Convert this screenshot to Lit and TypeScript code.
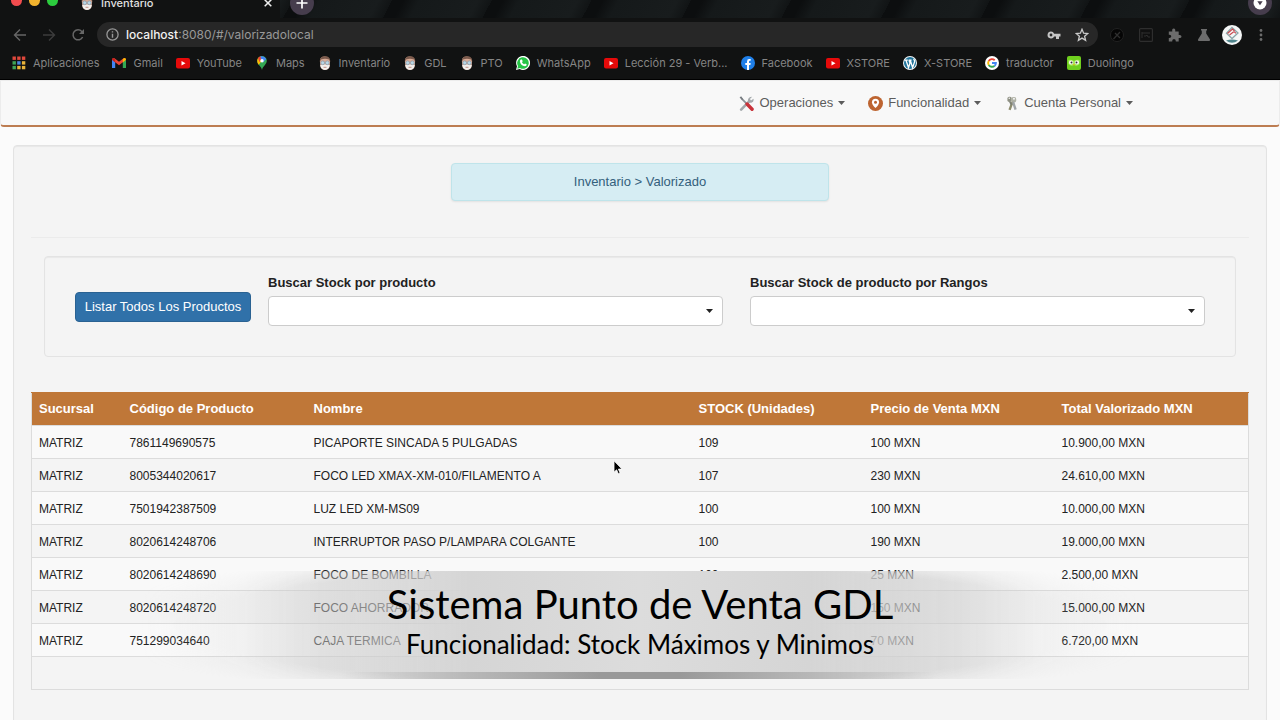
import { LitElement, html, css, svg } from "lit";
import { customElement } from "lit/decorators.js";

const face = svg`
  <path d="M2 7Q1 0 7 0.5T12 7L11.500 11Q10 14 7 14T2.500 11Z" fill="#d9ab96"/>
  <path d="M1.800 6Q1.500 .3 7 .3T12.200 6L11 3.500Q7 1.800 3 3.500Z" fill="#7b5a4c"/>
  <path d="M2.200 9Q7 8 11.800 9L11 12Q9 14 7 14T3 12Z" fill="#f3efec"/>
  <circle cx="4.700" cy="6.800" r="1.900" fill="#b9d6e4" stroke="#7c93a5" stroke-width=".6"/>
  <circle cx="9.300" cy="6.800" r="1.900" fill="#b9d6e4" stroke="#7c93a5" stroke-width=".6"/>
  <path d="M5.500 11.300h3" stroke="#b0786c" stroke-width=".8"/>`;
const youtube = svg`<rect y="2" width="14" height="10.500" rx="2" fill="#e60a0a"/><path d="M5.500 4.900v4.700l4-2.350z" fill="#fff"/>`;
const appColors = ["#e0483c", "#e0483c", "#e0483c", "#3fa457", "#4a86e0", "#e9b43a", "#3fa457", "#e9b43a", "#e9b43a"];

const icons: Record<string, unknown> = {
  apps: appColors.map((c, i) => svg`<rect x=${0.5 + (i % 3) * 4.7} y=${0.5 + Math.floor(i / 3) * 4.7} width="3.4" height="3.4" fill=${c}/>`),
  gmail: svg`<path d="M0 3.500V12h3.200V6z" fill="#4285f4"/><path d="M14 3.500V12h-3.200V6z" fill="#34a853"/><path d="M0 3.800Q.3 1.500 2.500 2.300L7 5.800l4.500-3.500Q13.700 1.500 14 3.800L7 9.300z" fill="#ea4335"/><path d="M10.800 2.900Q13.800 .8 14 3.800L10.800 6.400z" fill="#fbbc04"/><path d="M3.200 2.900Q.2 .8 0 3.800L3.200 6.400z" fill="#c5221f"/>`,
  youtube,
  maps: svg`<path d="M7 14C6.500 10.500 2.200 8.500 2.200 4.800A4.800 4.800 0 0 1 11.800 4.800C11.800 8.500 7.500 10.500 7 14Z" fill="#34a853"/><path d="M2.200 4.800Q2.200 2.500 4 1.200L7 4.800 3.600 8.800Q2.200 7 2.200 4.800Z" fill="#fbbc04"/><path d="M3 2.200A4.800 4.800 0 0 1 5.500 .3L7.500 2.500 4.500 6z" fill="#ea4335"/><path d="M5.500 .3Q9.500-.5 11.300 3L8 6.500 6 4z" fill="#4285f4"/><circle cx="7" cy="4.800" r="1.700" fill="#fff"/>`,
  face,
  whatsapp: svg`<path d="M0 14L1 10.300A7 7 0 1 1 3.700 13Z" fill="#fff"/><path d="M1.300 12.700L2 10A5.800 5.800 0 1 1 4 12Z" fill="#26c446"/><path d="M4.800 3.600l1.200 0 .7 1.700-.7.900Q6.700 7.700 8.200 8.300l.8-.9 1.700.8q0 1.800-1.700 2Q4.500 9.600 3.900 5.400 3.900 4.300 4.800 3.600Z" fill="#fff"/>`,
  facebook: svg`<circle cx="7" cy="7" r="7" fill="#1f7fe8"/><path d="M6 14V9H4.300V7H6V5.400Q6 3 8.300 3H9.700V4.800H8.800Q8 4.800 8 5.700V7H9.700L9.400 9H8v5z" fill="#fff"/>`,
  wordpress: svg`<circle cx="7" cy="7" r="7" fill="#f1f6f8"/><circle cx="7" cy="7" r="6" fill="#21749b"/><path d="M1.500 4.200h3.300M3 4.300l2.500 7.300L7 7 6 4.300M5.600 4.200h3M7.300 4.300l2.300 7.300 2-6Q11.700 4 10.500 3" fill="none" stroke="#fff" stroke-width="1.300"/>`,
  google: svg`<circle cx="7" cy="7" r="7" fill="#fff"/><g fill="none" stroke-width="1.900"><path d="M3.700 5A3.900 3.900 0 0 1 9.700 4.200" stroke="#ea4335"/><path d="M3.700 9A3.900 3.900 0 0 1 3.700 5" stroke="#fbbc05"/><path d="M9.500 9.900A3.900 3.900 0 0 1 3.700 9" stroke="#34a853"/><path d="M7 7h3.900A3.900 3.900 0 0 1 9.500 9.900" stroke="#4285f4"/></g>`,
  duolingo: svg`<rect width="14" height="14" rx="2" fill="#6fd01e"/><path d="M1.500 4Q4 3 7 5q3-2 5.500-1v4q-2.500 3-5.500 1-3 2-5.500-1z" fill="#a8ec5c"/><circle cx="4" cy="6.500" r="2" fill="#fff"/><circle cx="10" cy="6.500" r="2" fill="#fff"/><circle cx="4.500" cy="6.500" r="1" fill="#333"/><circle cx="9.500" cy="6.500" r="1" fill="#333"/><path d="M6 8h2L7 9.800z" fill="#f4a91c"/>`,
  tools: svg`<path d="M2 2L12 12" stroke="#8b9095" stroke-width="1.600"/><path d="M2 12.700L9.500 5" stroke="#a3a8ab" stroke-width="2.400" stroke-linecap="round"/><path d="M12.300.7L10.200 2.800l1 1.300 2.300-1.600q.7 3-2 3.700-3 .3-3.300-2Q8.500.9 12.300.7Z" fill="#a3a8ab"/><path d="M.5 1.500L2 .3l2 2.700-1 .8z" fill="#777c80"/><path d="M7.500 7.500l4.700 4.800" stroke="#c8323a" stroke-width="3.200" stroke-linecap="round"/>`,
  pin: svg`<circle cx="7" cy="7" r="7" fill="#bd6430"/><path d="M7 11.300Q3.700 8 3.700 5.800a3.300 3.300 0 0 1 6.600 0Q10.300 8 7 11.300Z" fill="#fff"/><circle cx="7" cy="5.800" r="1.400" fill="#bd6430"/>`,
  keys: svg`<rect x="3.200" y=".7" width="4" height="4.800" rx="1.600" fill="#8f9184"/><rect x="6.800" y=".9" width="4.600" height="5.200" rx="1.800" fill="#b0b2a6"/><circle cx="9.300" cy="2.500" r=".9" fill="#f8f8f8"/><circle cx="4.900" cy="2.200" r=".7" fill="#f8f8f8"/><path d="M8 5.500L5.200 13" stroke="#8d8c6c" stroke-width="2.200"/><path d="M8.500 5.500l2.300 7.300" stroke="#a0a5a8" stroke-width="2.200"/><path d="M5.500 5.500l1.700 3" stroke="#7d8076" stroke-width="1.600"/>`,
};

const icon = (name: string, cls = "icon") => html`<svg class=${cls} viewBox="0 0 14 14" aria-hidden="true">${icons[name]}</svg>`;

const bookmarks: [string, string][] = [
  ["apps", "Aplicaciones"], ["gmail", "Gmail"], ["youtube", "YouTube"], ["maps", "Maps"],
  ["face", "Inventario"], ["face", "GDL"], ["face", "PTO"], ["whatsapp", "WhatsApp"],
  ["youtube", "Lección 29 - Verb..."], ["facebook", "Facebook"], ["youtube", "XSTORE"],
  ["wordpress", "X-STORE"], ["google", "traductor"], ["duolingo", "Duolingo"],
];

@customElement("browser-chrome")
class BrowserChrome extends LitElement {
  static styles = css`
    :host { display: block; height: 80px; overflow: hidden; background: #111212; border-bottom: 1px solid #000; box-sizing: border-box; font-family: Inter, "Liberation Sans", sans-serif; font-size: 11px; color: #858585; }
    button { padding: 0; border: 0; background: none; color: inherit; display: flex; align-items: center; justify-content: center; }
    .strip { display: flex; align-items: center; height: 30px; margin-top: -12px; padding-right: 8px; background: repeating-linear-gradient(118deg, #0c0e0f 0 10px, #15191a 24px, #181c1d 76px, #111415 88px); }
    .tab { display: flex; align-items: center; width: 280px; height: 30px; box-sizing: border-box; background: #111212; padding: 0 5px 0 11px; }
    .lights { display: flex; gap: 7px; width: 69px; margin-top: -6px; }
    .light { width: 11px; height: 11px; border-radius: 50%; }
    .red { background: #f24c4e; } .yellow { background: #f2b32e; } .green { background: #2ccc3e; }
    .tab .icon { margin-right: 7px; }
    .title { flex: 1; color: #e0e0e0; font-weight: 500; }
    .icon { width: 14px; height: 14px; flex: none; }
    .close { width: 14px; height: 14px; color: #eee; }
    .plus { width: 24px; height: 24px; border-radius: 50%; background: #463d4d; color: #fff; margin-left: 10px; }
    .more { width: 24px; height: 24px; border-radius: 50%; background: #463d4d; margin-left: auto; }
    .bar { display: flex; align-items: center; height: 33px; padding: 0 12px; gap: 14px; }
    .bar > button { width: 15px; height: 24px; flex: none; }
    .pill { flex: 1; display: flex; align-items: center; gap: 7px; height: 25px; border-radius: 13px; background: #272727; padding: 0 9px; margin-left: -2px; margin-right: -3px; }
    .url { flex: 1; min-width: 0; font-size: 12px; color: #999; }
    .host { color: #f2f2f2; font-weight: 500; }
    .pill button { width: 14px; height: 20px; color: #c9c9c9; margin-left: 7px; }
    .bar .avatar { width: 20px; height: 20px; margin: 0 -3px; }
    .marks { display: flex; align-items: center; height: 24px; padding: 0 12px; gap: 13px; }
    .mark { display: flex; align-items: center; gap: 7px; color: inherit; text-decoration: none; white-space: nowrap; }
  `;
  render() {
    return html`
      <div class="strip">
        <div class="tab">
          <div class="lights"><span class="light red"></span><span class="light yellow"></span><span class="light green"></span></div>
          ${icon("face")}<span class="title">Inventario</span>
          <button class="close" aria-label="Cerrar"><svg width="8" height="8" viewBox="0 0 8 8"><path d="M.7.7l6.600 6.600M7.300.7L.7 7.300" stroke="currentColor" stroke-width="1.500"/></svg></button>
        </div>
        <button class="plus" aria-label="Nueva pestaña"><svg width="12" height="12" viewBox="0 0 12 12"><path d="M6 .5v11M.5 6h11" stroke="currentColor" stroke-width="1.700"/></svg></button>
        <button class="more" aria-label="Pestañas"><svg width="14" height="14" viewBox="0 0 14 14"><circle cx="7" cy="7" r="6.500" fill="#fff"/><path d="M4.300 5.200h5.400L7 9.300z" fill="#463d4d"/></svg></button>
      </div>
      <div class="bar">
        <button aria-label="Atrás"><svg width="14" height="14" viewBox="0 0 14 14"><path d="M13 7H2M7 1.500L1.500 7 7 12.500" fill="none" stroke="#666" stroke-width="1.400"/></svg></button>
        <button aria-label="Adelante"><svg width="14" height="14" viewBox="0 0 14 14"><path d="M1 7h11M7 1.500L12.500 7 7 12.500" fill="none" stroke="#3c3c3c" stroke-width="1.400"/></svg></button>
        <button aria-label="Recargar"><svg width="14" height="14" viewBox="0 0 14 14"><path d="M11.600 9A5 5 0 1 1 10.800 3.500L12.300 5" fill="none" stroke="#666" stroke-width="1.500"/><path d="M13 1v5H8z" fill="#666"/></svg></button>
        <div class="pill">
          <svg width="13" height="13" viewBox="0 0 13 13"><circle cx="6.500" cy="6.500" r="5.600" fill="none" stroke="#999" stroke-width="1.300"/><path d="M6.500 5.700v4M6.500 3.200v1.400" stroke="#999" stroke-width="1.400"/></svg>
          <span class="url"><span class="host">localhost</span>:8080/#/valorizadolocal</span>
          <button aria-label="Contraseñas"><svg width="14" height="14" viewBox="0 0 14 14"><path d="M4 3.500a3.500 3.500 0 1 0 3.200 5H9V11h3V8.500h1.500V5.700H7.200A3.500 3.500 0 0 0 4 3.500Z" fill="#c4c4c4"/><circle cx="4" cy="7" r="1.400" fill="#272727"/></svg></button>
          <button aria-label="Marcador"><svg width="14" height="14" viewBox="0 0 14 14"><path d="M7 1.300l1.600 3.900 4.200.3-3.200 2.700 1 4.100L7 10.100l-3.600 2.200 1-4.100L1.200 5.500l4.200-.3z" fill="none" stroke="#c9c9c9" stroke-width="1.300"/></svg></button>
        </div>
        <button aria-label="Extensión 1"><svg width="14" height="14" viewBox="0 0 14 14"><circle cx="7" cy="7" r="6.500" fill="#050505" stroke="#222"/><path d="M3.500 11L10 4M5 5l5 5" stroke="#2e2e2e" stroke-width="1.300"/></svg></button>
        <button aria-label="Extensión 2"><svg width="14" height="14" viewBox="0 0 14 14"><rect x=".6" y=".6" width="12.800" height="12.800" rx="1" fill="#101010" stroke="#2e2e2e" stroke-width="1.200"/><path d="M3 4v6M3 5h8M5 8h2l1-1 1 2h2" fill="none" stroke="#2e2e2e"/></svg></button>
        <button aria-label="Extensiones"><svg width="14" height="14" viewBox="0 0 14 14"><path d="M.8 3.500h3.500Q3.700.6 5.700.6T7.200 3.500h3.500V7q2.800-.5 2.800 1.500t-2.800 1.500v3.500H7.800q.3-2.500-1.800-2.500T4.200 13.500H.8V10q2.500.2 2.500-1.700T.8 6.700Z" fill="#6c6c6c"/></svg></button>
        <button aria-label="Labs"><svg width="14" height="14" viewBox="0 0 14 14"><path d="M4 1h6v1.600H9.200V5.500L13 11.500Q13.300 13 12 13H2Q.7 13 1 11.500L4.800 5.500V2.600H4z" fill="#6c6c6c"/></svg></button>
        <button class="avatar" aria-label="Perfil"><svg width="20" height="20" viewBox="0 0 20 20"><circle cx="10" cy="10" r="10" fill="#f4f6f6"/><path d="M4 15.500Q10 13.500 16 15.500 10 20 4 15.500Z" fill="#4f858c"/><path d="M10 2.500L16 8 10 13.500 4.500 8.300z" fill="none" stroke="#8ba5a8" stroke-width="1.300"/><path d="M5.500 8.500L10.500 4 12.500 6M7.500 10L12 6.500 14 8.300" fill="none" stroke="#c8464d" stroke-width="1.100"/></svg></button>
        <button aria-label="Menú"><svg width="4" height="14" viewBox="0 0 4 14" fill="#6c6c6c"><circle cx="2" cy="2.500" r="1.400"/><circle cx="2" cy="7" r="1.400"/><circle cx="2" cy="11.500" r="1.400"/></svg></button>
      </div>
      <nav class="marks">${bookmarks.map(([i, t]) => html`<a class="mark" href="#">${icon(i)}<span>${t}</span></a>`)}</nav>`;
  }
}

const rows = [
  ["7861149690575", "PICAPORTE SINCADA 5 PULGADAS", "109", "100 MXN", "10.900,00 MXN"],
  ["8005344020617", "FOCO LED XMAX-XM-010/FILAMENTO A", "107", "230 MXN", "24.610,00 MXN"],
  ["7501942387509", "LUZ LED XM-MS09", "100", "100 MXN", "10.000,00 MXN"],
  ["8020614248706", "INTERRUPTOR PASO P/LAMPARA COLGANTE", "100", "190 MXN", "19.000,00 MXN"],
  ["8020614248690", "FOCO DE BOMBILLA", "100", "25 MXN", "2.500,00 MXN"],
  ["8020614248720", "FOCO AHORRADOR", "100", "150 MXN", "15.000,00 MXN"],
  ["751299034640", "CAJA TERMICA", "96", "70 MXN", "6.720,00 MXN"],
];
const heads = ["Sucursal", "Código de Producto", "Nombre", "STOCK (Unidades)", "Precio de Venta MXN", "Total Valorizado MXN"];
const caret = html`<svg class="caret" width="7" height="4" viewBox="0 0 7 4" aria-hidden="true"><path d="M0 0h7L3.500 4z" fill="currentColor"/></svg>`;

@customElement("app-root")
class AppRoot extends LitElement {
  static styles = css`
    :host { display: block; position: relative; height: 100vh; overflow: hidden; background: #fbfbfb; font: 13px/18px "Liberation Sans", Arial, sans-serif; color: #222; }
    .nav { display: flex; justify-content: flex-end; align-items: center; gap: 23px; height: 47px; box-sizing: border-box; padding-right: 146px; background: #f8f8f8; border: 1px solid #ececec; border-bottom: 2px solid #bd7d52; border-radius: 0 0 4px 4px; }
    .item { display: flex; align-items: center; gap: 5px; color: #5c5c5c; text-decoration: none; }
    .icon { width: 15px; height: 15px; }
    .well { margin: 18px 13px 0; min-height: 640px; box-sizing: border-box; padding: 17px; background: #f4f4f4; border: 1px solid #e3e3e3; border-radius: 4px; box-shadow: inset 0 1px 1px #0000000d; }
    .crumb { width: 31%; box-sizing: border-box; margin: 0 auto; padding: 9px; text-align: center; color: #34607c; background: #d6edf3; border: 1px solid #bfe4ea; border-radius: 4px; box-shadow: 0 1px 2px #00000014; }
    .rule { margin: 36px 0 18px; border: 0; border-top: 1px solid #ebebeb; }
    .search { display: flex; gap: 17px; margin: 0 13px; padding: 17px 30px 30px; background: #f4f4f4; border: 1px solid #e3e3e3; border-radius: 4px; box-shadow: inset 0 1px 1px #0000000d; }
    .list { flex: none; width: 176px; margin-top: 18px; height: 30px; padding: 0; border: 1px solid #2a6292; border-radius: 4px; background: #3071a9; color: #fff; font: inherit; }
    .fields { flex: 1; display: grid; grid-template-columns: 1fr 1fr; column-gap: 27px; }
    .field { display: grid; grid-template-rows: 18px 30px; row-gap: 4px; }
    .label { font-weight: bold; }
    .control { display: grid; align-items: center; }
    .select, .control .caret { grid-area: 1 / 1; }
    .select { appearance: none; width: 100%; height: 30px; border: 1px solid #ccc; border-radius: 4px; background: #fff; font: inherit; }
    .control .caret { justify-self: end; margin-right: 10px; pointer-events: none; color: #222; }
    .table { width: 100%; margin-top: 35px; border-collapse: collapse; table-layout: fixed; border: 1px solid #dcdcdc; }
    .c0 { width: 91px; } .c1 { width: 184px; } .c2 { width: 385px; } .c3 { width: 172px; } .c4 { width: 191px; }
    th, td { height: 33px; box-sizing: border-box; padding: 0 7px; text-align: left; border-top: 1px solid #dcdcdc; white-space: nowrap; }
    td { padding-top: 2px; font-size: 12px; }
    th { background: #bf7738; color: #fff; border-top-color: #bf7738; }
    tbody tr:nth-child(odd) { background: #f9f9f9; }
    tbody tr:last-child { background: none; }
    .banner { position: absolute; top: 571px; left: 11%; right: 11%; height: 108px; box-sizing: border-box; padding-top: 9px; text-align: center; color: #000; font-family: Lato, sans-serif; pointer-events: none; }
    .shade, .edge { position: absolute; inset: 0; }
    .shade { background: linear-gradient(90deg, #c8c8c800, #c8c8c826 10%, #c8c8c880 18%, #cececeb8 27%, #d5d5d5 33%, #dcdcdc 50%, #d5d5d5 67%, #cececeb8 76%, #c8c8c880 82%, #c8c8c826 90%, #c8c8c800); -webkit-mask: radial-gradient(ellipse 58% 70% at 50% 50%, #000 78%, #0000); }
    .edge { top: auto; height: 7px; background: linear-gradient(90deg, #99999900 20%, #999 46%, #999 54%, #99999900 80%); }
    .big, .small { position: relative; margin: 0; font-weight: 400; }
    .big { font-size: 40px; line-height: 48px; }
    .small { font-size: 26px; line-height: 32px; }
    .pointer { position: absolute; left: 613px; top: 460px; }
  `;
  render() {
    return html`
      <browser-chrome></browser-chrome>
      <nav class="nav">
        ${[["tools", "Operaciones"], ["pin", "Funcionalidad"], ["keys", "Cuenta Personal"]].map(([i, t]) => html`<a class="item" href="#">${icon(i)}<span>${t}</span>${caret}</a>`)}
      </nav>
      <main class="well">
        <div class="crumb">Inventario &gt; Valorizado</div>
        <hr class="rule">
        <form class="search">
          <button class="list" type="button">Listar Todos Los Productos</button>
          <div class="fields">
            <div class="field"><label class="label" for="producto">Buscar Stock por producto</label><div class="control"><select class="select" id="producto"><option></option></select>${caret}</div></div>
            <div class="field"><label class="label" for="rangos">Buscar Stock de producto por Rangos</label><div class="control"><select class="select" id="rangos"><option></option></select>${caret}</div></div>
          </div>
        </form>
        <table class="table">
          <colgroup>${heads.map((_, i) => html`<col class="c${i}">`)}</colgroup>
          <thead><tr>${heads.map((h) => html`<th>${h}</th>`)}</tr></thead>
          <tbody>
            ${rows.map((r) => html`<tr><td>MATRIZ</td>${r.map((c) => html`<td>${c}</td>`)}</tr>`)}
            <tr><td colspan="6"></td></tr>
          </tbody>
        </table>
      </main>
      <div class="banner">
        <div class="shade"></div><div class="edge"></div>
        <h1 class="big">Sistema Punto de Venta GDL</h1>
        <h2 class="small">Funcionalidad: Stock Máximos y Minimos</h2>
      </div>
      <svg class="pointer" width="10" height="15" viewBox="0 0 10 15" aria-hidden="true"><path d="M1 .8v11.400l2.600-2.400 1.700 4 1.800-.8-1.700-3.900H9z" fill="#000" stroke="#fff" stroke-width=".8"/></svg>`;
  }
}
